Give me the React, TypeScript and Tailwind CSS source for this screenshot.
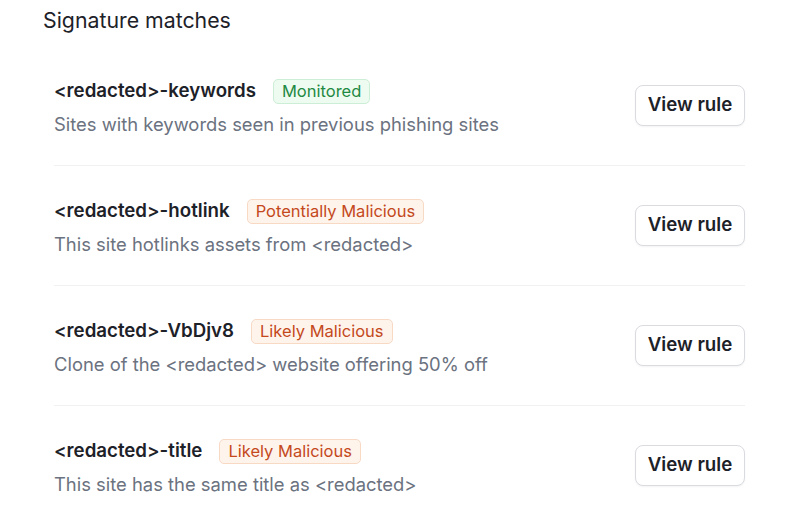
const rows = [
  {
    name: '<redacted>-keywords',
    badge: 'Monitored',
    tone: 'green',
    desc: 'Sites with keywords seen in previous phishing sites',
  },
  {
    name: '<redacted>-hotlink',
    badge: 'Potentially Malicious',
    tone: 'orange',
    desc: 'This site hotlinks assets from <redacted>',
  },
  {
    name: '<redacted>-VbDjv8',
    badge: 'Likely Malicious',
    tone: 'orange',
    desc: 'Clone of the <redacted> website offering 50% off',
  },
  {
    name: '<redacted>-title',
    badge: 'Likely Malicious',
    tone: 'orange',
    desc: 'This site has the same title as <redacted>',
  },
]

function Badge({ label, tone }: { label: string; tone: string }) {
  const cls =
    tone === 'green'
      ? 'bg-[#eefbf1] border-[#cdeed6] text-[#1f8a43]'
      : 'bg-[#fff4ec] border-[#f8d9c4] text-[#c4491c]'
  return (
    <span className={`inline-flex items-center h-[25px] px-[8px] rounded-[5px] border text-[16.5px] leading-none ${cls}`}>
      {label}
    </span>
  )
}

export default function App() {
  return (
    <div className="w-[799px] h-[516px] bg-white font-['Inter',sans-serif] text-[#1d2128] overflow-hidden">
      <h2 className="pl-[43px] pt-[7px] text-[21.3px] leading-[26px] font-normal">Signature matches</h2>

      <ul className="ml-[54px] mr-[54px] mt-[13px]">
        {rows.map((r, i) => (
          <li
            key={r.name}
            className={`flex items-center justify-between pt-[31px] pb-[27px] ${i < rows.length - 1 ? 'border-b border-[#f0f1f3]' : ''}`}
          >
            <div className="flex flex-col gap-[5px]">
              <div className="flex items-center gap-[17px]">
                <span className="text-[18.7px] leading-[28px] font-semibold">{r.name}</span>
                <Badge label={r.badge} tone={r.tone} />
              </div>
              <p className="text-[18.4px] leading-[28px] text-[#6b7280]">{r.desc}</p>
            </div>
            <button
              type="button"
              className="-mt-[4px] h-[41px] w-[110px] rounded-[8px] border border-[#d9dbe0] bg-white text-[18.7px] font-semibold shadow-[0_1px_2px_rgba(0,0,0,0.05)]"
            >
              View rule
            </button>
          </li>
        ))}
      </ul>
    </div>
  )
}
